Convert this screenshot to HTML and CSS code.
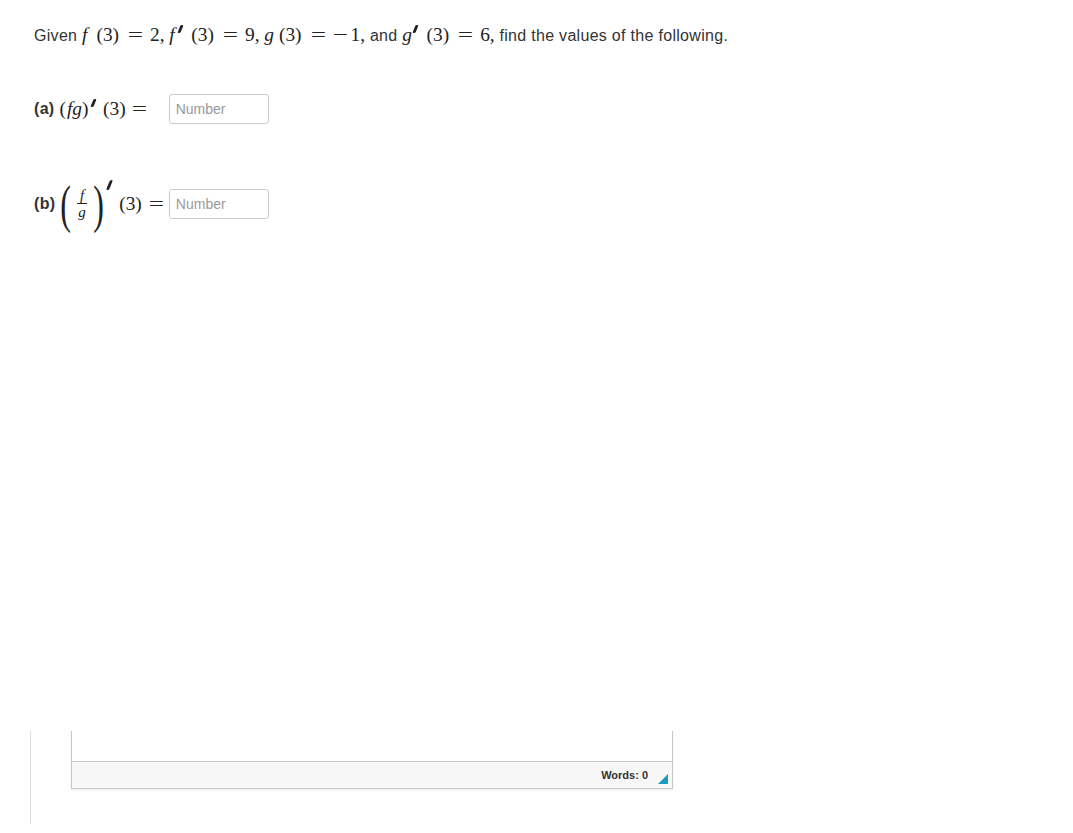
FILE: index.html
```html
<!DOCTYPE html>
<html>
<head>
<meta charset="utf-8">
<link rel="stylesheet" href="styles.css">
</head>
<body>
<div class="page">
  <p class="question">Given <span class="m"><i class="fv">f</i><span class="p">(3)</span><span class="eq">=</span>2,</span> <span class="m"><i class="fv fv-pr">f</i><span class="pr"></span><span class="p">(3)</span><span class="eq">=</span>9,</span> <span class="m"><i class="gv">g</i><span class="p">(3)</span><span class="eq">=</span><span class="minus">−</span>1,</span> and <span class="m"><i class="gv gv-pr">g</i><span class="pr"></span><span class="p">(3)</span><span class="eq">=</span>6,</span> find the values of the following.</p>

  <div class="part part-a">
    <b class="lbl">(a)</b>
    <span class="m">(<i class="fg">fg</i>)<span class="pr pr-a"></span><span class="p">(3)</span><span class="eq eq-a">=</span></span>
    <input class="num num-a" type="text" placeholder="Number">
  </div>

  <div class="part part-b">
    <b class="lbl">(b)</b>
    <span class="m big">
      <span class="bp">(</span>
      <span class="frac"><i class="top">f</i><i class="bot">g</i></span>
      <span class="bp">)</span>
      <span class="bigpr"></span>
      <span class="p">(3)</span><span class="eq eq-b">=</span>
    </span>
    <input class="num" type="text" placeholder="Number">
  </div>

  <div class="editor-wrap">
    <div class="editor">
      <div class="editor-body"></div>
      <div class="editor-foot">
        <span class="words">Words: 0</span>
        <span class="grip"></span>
      </div>
    </div>
  </div>
</div>
</body>
</html>
```
FILE: styles.css
```css
html, body {
  margin: 0;
  padding: 0;
  background: #fff;
}
body {
  font-family: "Liberation Sans", Arial, sans-serif;
  color: #333;
  font-size: 16px;
}
.page {
  padding: 0 0 0 34px;
}
.question {
  margin: 0;
  padding-top: 24px;
  line-height: 22px;
  height: 22px;
  letter-spacing: 0.3px;
  white-space: nowrap;
}
.m {
  font-family: "Liberation Serif", "Times New Roman", serif;
  font-size: 19.4px;
  color: #222;
  white-space: nowrap;
  letter-spacing: 0;
}
.m i {
  font-style: italic;
}
.fv {
  margin-right: 9px;
}
.fv-pr {
  margin-right: 3px;
}
.gv {
  margin-right: 5px;
}
.gv-pr {
  margin-right: 1px;
}
.pr {
  display: inline-block;
  width: 2.6px;
  height: 8px;
  background: #222;
  border-radius: 1.3px;
  transform: skewX(-22deg);
  vertical-align: 8px;
  margin: 0 10px 0 1px;
}
.eq {
  display: inline-block;
  width: 15px;
  text-align: center;
  transform: scaleX(1.4);
  margin: 0 7px 0 9px;
}
.minus {
  display: inline-block;
  width: 15px;
  text-align: center;
  transform: scaleX(1.4);
  margin-right: 3px;
}
.part {
  display: flex;
  align-items: center;
}
.part-a {
  margin-top: 48px;
  height: 30px;
}
.lbl {
  font-weight: bold;
  font-size: 16px;
  letter-spacing: 0.3px;
  margin-right: 5px;
}
.fg {
  margin: 0 0 0 1px;
}
.pr-a {
  margin: 0 9px 0 3px;
}
.eq-a {
  margin-left: 6px;
}
.num {
  box-sizing: border-box;
  width: 100px;
  height: 30px;
  border: 1px solid #ccc;
  border-radius: 3px;
  font-family: "Liberation Sans", Arial, sans-serif;
  font-size: 14px;
  padding: 0 6px;
  color: #333;
  margin-left: 3px;
}
.num-a {
  margin-left: 15px;
}
.num::placeholder {
  color: #999;
}
.part-b {
  margin-top: 65px;
  height: 30px;
}
.big {
  display: inline-flex;
  align-items: center;
}
.bp {
  display: inline-block;
  font-size: 32px;
  transform: scaleY(1.65);
  line-height: 30px;
}
.frac {
  display: inline-flex;
  flex-direction: column;
  align-items: center;
  font-size: 15px;
  margin: 0 6px 0 6px;
}
.frac .top {
  border-bottom: 1px solid #222;
  padding: 0 3px 1px;
  line-height: 14px;
}
.frac .bot {
  line-height: 16px;
}
.bigpr {
  display: inline-block;
  width: 3.4px;
  height: 10px;
  background: #222;
  border-radius: 1.7px;
  transform: skewX(-22deg);
  margin: -38px 0 0 4px;
}
.big .p {
  margin-left: 8px;
}
.eq-b {
  margin: 0 2px 0 7px;
}
.editor-wrap {
  margin-top: 512px;
  margin-left: -4px;
  border-left: 1px solid #ddd;
  padding-left: 40px;
  padding-bottom: 35px;
  width: 602px;
}
.editor {
  border: 1px solid #c8c8c8;
  border-top: none;
  box-shadow: 0 1px 2px rgba(0,0,0,0.08);
}
.editor-body {
  height: 30px;
  background: #fff;
}
.editor-foot {
  height: 26px;
  background: #f7f7f7;
  border-top: 1px solid #c8c8c8;
  display: flex;
  align-items: center;
  justify-content: flex-end;
  padding-right: 4px;
}
.words {
  font-size: 11px;
  font-weight: bold;
  color: #333;
  margin-right: 10px;
}
.grip {
  width: 0;
  height: 0;
  border-left: 10px solid transparent;
  border-bottom: 10px solid #1b9bc0;
  margin-top: 8px;
}
```
